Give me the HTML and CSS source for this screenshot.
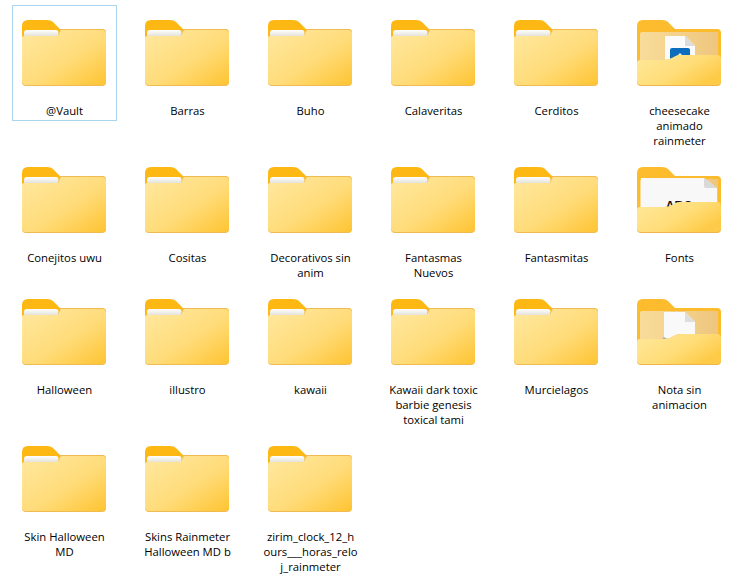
FILE: index.html
```html
<!DOCTYPE html>
<html lang="es">
<head>
<meta charset="utf-8">
<title>Carpetas</title>
<link rel="stylesheet" href="styles.css">
</head>
<body>
<svg class="defs" width="0" height="0" aria-hidden="true">
  <defs>
    <linearGradient id="body" x1="0" y1="0" x2="1" y2="1">
      <stop offset="0" stop-color="#ffe8a0"/>
      <stop offset="0.55" stop-color="#ffdc7a"/>
      <stop offset="1" stop-color="#fec432"/>
    </linearGradient>
    <linearGradient id="front" x1="0" y1="0" x2="1" y2="0.6">
      <stop offset="0" stop-color="#ffe89c"/>
      <stop offset="0.6" stop-color="#ffdd78"/>
      <stop offset="1" stop-color="#fecb48"/>
    </linearGradient>
    <linearGradient id="inner" x1="0" y1="0" x2="1" y2="0">
      <stop offset="0" stop-color="#f9dc9a"/>
      <stop offset="1" stop-color="#eec67e"/>
    </linearGradient>
    <linearGradient id="strip" x1="0" y1="0" x2="0" y2="1">
      <stop offset="0" stop-color="#ffffff"/>
      <stop offset="1" stop-color="#e4e2da"/>
    </linearGradient>
    <symbol id="folder" viewBox="0 0 84 66">
      <path d="M0 6Q0 0 6 0H25Q29 0 31 2L38 9H80Q84 9 84 13V30H0Z" fill="#fdb813"/>
      <path d="M0 18Q0 16 2 16H35L38 9H80Q84 9 84 13V62Q84 66 80 66H4Q0 66 0 62Z" fill="#f0bc52"/>
      <path d="M0 18Q0 16 2 16H36L39 10H80Q84 10 84 14V61Q84 65 80 65H4Q0 65 0 61Z" fill="url(#body)"/>
      <path d="M2 12.500Q2 10 5 10H34Q36 10 36.500 12L36 16H2Z" fill="url(#strip)"/>
    </symbol>
    <symbol id="back" viewBox="0 0 84 66">
      <path d="M0 6Q0 0 6 0H25Q29 0 31 2L38 9H80Q84 9 84 13V50H0Z" fill="#fdbc2e"/>
      <path d="M3 14Q3 12 5 12H81V50H3Z" fill="url(#inner)"/>
    </symbol>
    <symbol id="flap" viewBox="0 0 84 66">
      <path d="M0 43Q0 40 3 40H27Q32 40 36 37.500Q39 35 43 35H80Q84 35 84 39V62Q84 66 80 66H4Q0 66 0 62Z" fill="#edb54b"/>
      <path d="M0 43Q0 40 3 40H27Q32 40 36 37.500Q39 35 43 35H80Q84 35 84 39V61Q84 65 80 65H4Q0 65 0 61Z" fill="url(#front)"/>
    </symbol>
  </defs>
</svg>
<main class="grid">
  <div class="item selected"><svg class="icon" viewBox="0 0 84 66"><use href="#folder"/></svg><span class="name">@Vault</span></div>
  <div class="item"><svg class="icon" viewBox="0 0 84 66"><use href="#folder"/></svg><span class="name">Barras</span></div>
  <div class="item"><svg class="icon" viewBox="0 0 84 66"><use href="#folder"/></svg><span class="name">Buho</span></div>
  <div class="item"><svg class="icon" viewBox="0 0 84 66"><use href="#folder"/></svg><span class="name">Calaveritas</span></div>
  <div class="item"><svg class="icon" viewBox="0 0 84 66"><use href="#folder"/></svg><span class="name">Cerditos</span></div>
  <div class="item"><svg class="icon" viewBox="0 0 84 66">
    <use href="#back"/>
    <path d="M28 16H48L58 26V50H28Z" fill="#fbfbfb"/>
    <path d="M48 16L58 26H48Z" fill="#dcdcdc"/>
    <path d="M33 30Q33 28 35 28H51Q53 28 53 30V45H33Z" fill="#0c6dbf"/>
    <path d="M39 37L43 33L47 37V41H39Z" fill="#e8f2fa"/>
    <use href="#flap"/>
  </svg><span class="name">cheesecake animado rainmeter</span></div>

  <div class="item"><svg class="icon" viewBox="0 0 84 66"><use href="#folder"/></svg><span class="name">Conejitos uwu</span></div>
  <div class="item"><svg class="icon" viewBox="0 0 84 66"><use href="#folder"/></svg><span class="name">Cositas</span></div>
  <div class="item"><svg class="icon" viewBox="0 0 84 66"><use href="#folder"/></svg><span class="name">Decorativos sin anim</span></div>
  <div class="item"><svg class="icon" viewBox="0 0 84 66"><use href="#folder"/></svg><span class="name">Fantasmas Nuevos</span></div>
  <div class="item"><svg class="icon" viewBox="0 0 84 66"><use href="#folder"/></svg><span class="name">Fantasmitas</span></div>
  <div class="item"><svg class="icon" viewBox="0 0 84 66">
    <use href="#back"/>
    <path d="M4 11H67L80 21V50H4Z" fill="#f8f8f8"/>
    <path d="M67 11L80 21H69Q67 21 67 19Z" fill="#d9d9d9"/>
    <text class="abc" x="42" y="43" text-anchor="middle">ABC</text>
    <use href="#flap"/>
  </svg><span class="name">Fonts</span></div>

  <div class="item"><svg class="icon" viewBox="0 0 84 66"><use href="#folder"/></svg><span class="name">Halloween</span></div>
  <div class="item"><svg class="icon" viewBox="0 0 84 66"><use href="#folder"/></svg><span class="name">illustro</span></div>
  <div class="item"><svg class="icon" viewBox="0 0 84 66"><use href="#folder"/></svg><span class="name">kawaii</span></div>
  <div class="item"><svg class="icon" viewBox="0 0 84 66"><use href="#folder"/></svg><span class="name">Kawaii dark toxic barbie genesis toxical tami</span></div>
  <div class="item"><svg class="icon" viewBox="0 0 84 66"><use href="#folder"/></svg><span class="name">Murcielagos</span></div>
  <div class="item"><svg class="icon" viewBox="0 0 84 66">
    <use href="#back"/>
    <path d="M27 13H48L58 23V50H27Z" fill="#f9f9f9"/>
    <path d="M48 13L58 23H48Z" fill="#dedede"/>
    <path d="M22 44L27 38L32 41L36 44V48H22Z" fill="#a9aeb4"/>
    <use href="#flap"/>
  </svg><span class="name">Nota sin animacion</span></div>

  <div class="item"><svg class="icon" viewBox="0 0 84 66"><use href="#folder"/></svg><span class="name">Skin Halloween MD</span></div>
  <div class="item"><svg class="icon" viewBox="0 0 84 66"><use href="#folder"/></svg><span class="name">Skins Rainmeter Halloween MD b</span></div>
  <div class="item"><svg class="icon" viewBox="0 0 84 66"><use href="#folder"/></svg><span class="name">zirim_clock_12_h ours___horas_relo j_rainmeter</span></div>
</main>
</body>
</html>
```

FILE: styles.css
```css
html, body {
  margin: 0;
  padding: 0;
  background: #ffffff;
}

body {
  width: 734px;
  height: 585px;
  overflow: hidden;
  font-family: "Open Sans", "Liberation Sans", sans-serif;
  font-size: 11.3px;
  line-height: 15px;
  color: #000000;
}

.defs {
  position: absolute;
}

.grid {
  display: grid;
  grid-template-columns: repeat(6, 105px);
  column-gap: 18px;
  row-gap: 1px;
  align-items: start;
  padding: 5px 0 0 12px;
}

.item {
  display: flex;
  flex-direction: column;
  align-items: center;
  padding: 14px 4px 2px;
  border: 1px solid transparent;
  box-sizing: border-box;
}

.selected {
  border-color: #a9d5ee;
}

.icon {
  display: block;
  width: 84px;
  height: 66px;
  margin: 0 1px 17px 0;
}

.name {
  display: block;
  width: 95px;
  text-align: center;
  overflow-wrap: anywhere;
}

.abc {
  font-family: "Liberation Sans", sans-serif;
  font-size: 12.5px;
  font-weight: 700;
  fill: #111111;
}
```
